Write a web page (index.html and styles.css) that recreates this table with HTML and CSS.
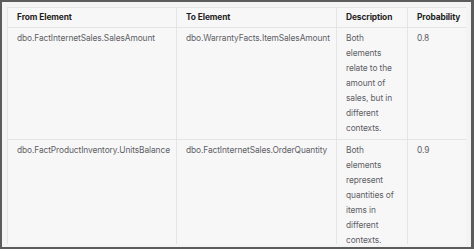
FILE: index.html
```html
<!DOCTYPE html>
<html>
<head>
<meta charset="utf-8">
<link rel="stylesheet" href="styles.css">
</head>
<body>
<div class="frame">
  <div class="table-wrap">
    <table class="grid">
      <colgroup>
        <col class="c1"><col class="c2"><col class="c3"><col class="c4">
      </colgroup>
      <thead>
        <tr>
          <th>From Element</th>
          <th>To Element</th>
          <th>Description</th>
          <th>Probability</th>
        </tr>
      </thead>
      <tbody>
        <tr>
          <td>dbo.FactInternetSales.SalesAmount</td>
          <td>dbo.WarrantyFacts.ItemSalesAmount</td>
          <td>Both elements relate to the amount of sales, but in different contexts.</td>
          <td>0.8</td>
        </tr>
        <tr>
          <td>dbo.FactProductInventory.UnitsBalance</td>
          <td>dbo.FactInternetSales.OrderQuantity</td>
          <td>Both elements represent quantities of items in different contexts.</td>
          <td>0.9</td>
        </tr>
      </tbody>
    </table>
  </div>
</div>
</body>
</html>
```
FILE: styles.css
```css
html, body {
  margin: 0;
  padding: 0;
  background: #ffffff;
}
.frame {
  box-sizing: border-box;
  width: 474px;
  height: 249px;
  border-style: solid;
  border-color: #5c5c5c;
  border-width: 2px 3px 2px 2px;
  background: #f4f4f5;
  padding: 5px 5px 3px 5px;
}
.table-wrap {
  height: 237px;
  overflow: hidden;
  background: #f7f7f8;
}
.grid {
  border-collapse: collapse;
  table-layout: fixed;
  width: 459px;
  font-family: Inter, "Noto Sans", sans-serif;
  font-size: 8.4px;
  letter-spacing: -0.1px;
  line-height: 15px;
}
.c1 { width: 169px; }
.c2 { width: 160px; }
.c3 { width: 71px; }
.c4 { width: 59px; }
.grid th, .grid td {
  border: 1px solid #e4e4e7;
  text-align: left;
  vertical-align: top;
  padding: 3px 8px 3px 9px;
}
.grid th {
  font-weight: 700;
  color: #1f1f22;
  padding-top: 2px;
  padding-bottom: 2px;
  padding-right: 4px;
  height: 15px;
}
.grid td {
  color: #5f5f66;
}
```
